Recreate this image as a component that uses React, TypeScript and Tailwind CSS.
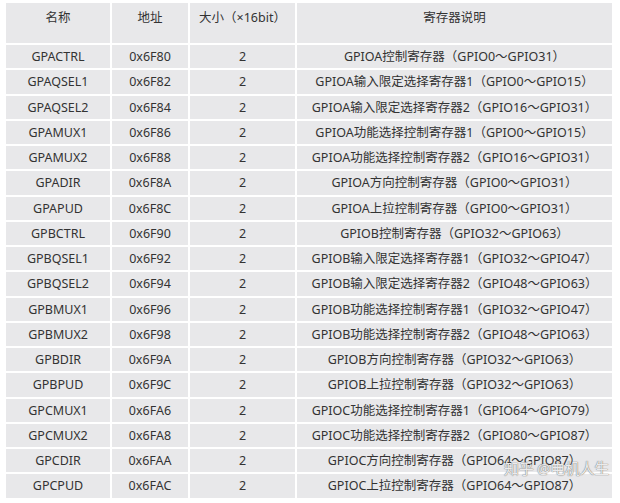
const rows: [string, string, string, string][] = [
  ["GPACTRL", "0x6F80", "2", "GPIOA控制寄存器（GPIO0～GPIO31）"],
  ["GPAQSEL1", "0x6F82", "2", "GPIOA输入限定选择寄存器1（GPIO0～GPIO15）"],
  ["GPAQSEL2", "0x6F84", "2", "GPIOA输入限定选择寄存器2（GPIO16～GPIO31）"],
  ["GPAMUX1", "0x6F86", "2", "GPIOA功能选择控制寄存器1（GPIO0～GPIO15）"],
  ["GPAMUX2", "0x6F88", "2", "GPIOA功能选择控制寄存器2（GPIO16～GPIO31）"],
  ["GPADIR", "0x6F8A", "2", "GPIOA方向控制寄存器（GPIO0～GPIO31）"],
  ["GPAPUD", "0x6F8C", "2", "GPIOA上拉控制寄存器（GPIO0～GPIO31）"],
  ["GPBCTRL", "0x6F90", "2", "GPIOB控制寄存器（GPIO32～GPIO63）"],
  ["GPBQSEL1", "0x6F92", "2", "GPIOB输入限定选择寄存器1（GPIO32～GPIO47）"],
  ["GPBQSEL2", "0x6F94", "2", "GPIOB输入限定选择寄存器2（GPIO48～GPIO63）"],
  ["GPBMUX1", "0x6F96", "2", "GPIOB功能选择控制寄存器1（GPIO32～GPIO47）"],
  ["GPBMUX2", "0x6F98", "2", "GPIOB功能选择控制寄存器2（GPIO48～GPIO63）"],
  ["GPBDIR", "0x6F9A", "2", "GPIOB方向控制寄存器（GPIO32～GPIO63）"],
  ["GPBPUD", "0x6F9C", "2", "GPIOB上拉控制寄存器（GPIO32～GPIO63）"],
  ["GPCMUX1", "0x6FA6", "2", "GPIOC功能选择控制寄存器1（GPIO64～GPIO79）"],
  ["GPCMUX2", "0x6FA8", "2", "GPIOC功能选择控制寄存器2（GPIO80～GPIO87）"],
  ["GPCDIR", "0x6FAA", "2", "GPIOC方向控制寄存器（GPIO64～GPIO87）"],
  ["GPCPUD", "0x6FAC", "2", "GPIOC上拉控制寄存器（GPIO64～GPIO87）"],
];

const font = { fontFamily: '"Noto Sans", "Noto Sans CJK SC", sans-serif' };

export default function App() {
  return (
    <main
      className="relative w-[620px] h-[503px] overflow-hidden bg-white text-[12.5px] text-[#333]"
      style={font}
    >
      <table className="ml-[4px] mt-[1px] border-separate border-spacing-[2px] table-fixed w-[610px]">
        <colgroup>
          <col className="w-[104px]" />
          <col className="w-[76px]" />
          <col className="w-[105px]" />
          <col className="w-[315px]" />
        </colgroup>
        <thead>
          <tr>
            {["名称", "地址", "大小（×16bit）", "寄存器说明"].map((h) => (
              <th
                key={h}
                className="h-[40px] p-0 pt-[3px] align-top font-normal bg-[#e8e8ea] leading-[24px]"
              >
                {h}
              </th>
            ))}
          </tr>
        </thead>
        <tbody>
          {rows.map((r) => (
            <tr key={r[0]}>
              {r.map((c, i) => (
                <td
                  key={i}
                  className="h-[23.25px] p-0 text-center align-middle bg-[#e8e8ea] leading-[23px] whitespace-nowrap"
                >
                  {c}
                </td>
              ))}
            </tr>
          ))}
        </tbody>
      </table>
      <div
        className="absolute left-[504px] top-[461px] text-[15px] leading-none text-white/85 whitespace-nowrap tracking-[-0.3px]"
        style={{ textShadow: "0 0 1px #777, 0 0 1px #777" }}
      >
        知乎 @电机人生
      </div>
    </main>
  );
}
